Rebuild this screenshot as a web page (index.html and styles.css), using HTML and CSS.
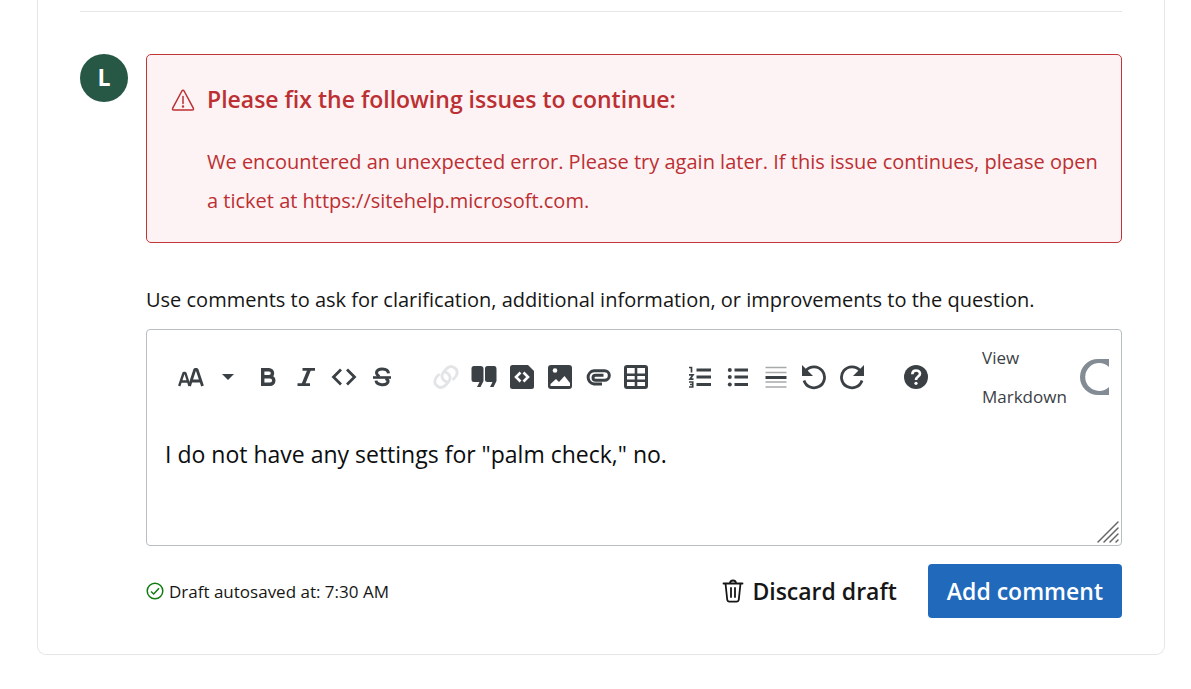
FILE: index.html
```html
<!DOCTYPE html>
<html lang="en">
<head>
    <meta charset="UTF-8">
    <meta name="viewport" content="width=device-width, initial-scale=1.0">
    <title>Add comment</title>
    <link rel="stylesheet" href="styles.css">
</head>
<body>
    <main class="card">
        <hr class="divider">
        <section class="comment">
            <div class="avatar">L</div>
            <form class="comment-form">
                <div class="alert" role="alert">
                    <svg class="alert-icon" width="24" height="24" viewBox="0 0 24 24" fill="none" stroke="currentColor" stroke-width="1.5" stroke-linejoin="round" stroke-linecap="round">
                        <path d="M10.9 3 1.7 20.2Q1 22 2.8 22H21.2Q23 22 22.3 20.2L13.1 3Q12 1.500 10.900 3Z"/>
                        <path d="M12 8.500V15.500"/>
                        <circle cx="12" cy="18.500" r=".5"/>
                    </svg>
                    <div>
                        <h2 class="alert-title">Please fix the following issues to continue:</h2>
                        <p class="alert-text">We encountered an unexpected error. Please try again later. If this issue continues, please open a ticket at https://sitehelp.microsoft.com.</p>
                    </div>
                </div>

                <label class="hint" for="comment">Use comments to ask for clarification, additional information, or improvements to the question.</label>

                <div class="editor">
                    <div class="toolbar">
                        <div class="group group-heading">
                            <button type="button" class="tool tool-heading" aria-label="Heading">
                                <svg width="26" height="20" viewBox="0 0 26 20" fill="none" stroke="currentColor" stroke-linejoin="bevel">
                                    <path stroke-width="2.400" d="M1.200 19 5.600 6H7.400L11.500 19M3 14.500H10"/>
                                    <path stroke-width="2.800" d="M11.500 19 16.800 2.500H19L24.500 19M13.500 14H22.500"/>
                                </svg>
                                <svg width="12" height="6" viewBox="0 0 12 6" fill="currentColor"><path d="M0 0H12L6 6Z"/></svg>
                            </button>
                        </div>
                        <div class="group">
                            <button type="button" class="tool" aria-label="Bold">
                                <svg width="26" height="26" viewBox="0 0 26 26" fill="none" stroke="currentColor" stroke-width="3.400"><path d="M7.700 5.700H14A3.500 3.500 0 0 1 14 12.700H7.700M7.700 12.700H15A3.800 3.800 0 0 1 15 20.300H7.700V4"/></svg>
                            </button>
                            <button type="button" class="tool" aria-label="Italic">
                                <svg width="26" height="26" viewBox="0 0 26 26" fill="none" stroke="currentColor" stroke-width="2.800"><path d="M9.500 5.400H22M4.500 20.600H17"/><path stroke-width="3.400" d="M16.500 5 10 21"/></svg>
                            </button>
                            <button type="button" class="tool" aria-label="Code">
                                <svg width="26" height="26" viewBox="0 0 26 26" fill="none" stroke="currentColor" stroke-width="2.800"><path d="M10 5.500 2.500 13 10 20.500M16 5.500 23.500 13 16 20.500"/></svg>
                            </button>
                            <button type="button" class="tool" aria-label="Strikethrough">
                                <svg width="26" height="26" viewBox="0 0 26 26" fill="none" stroke="currentColor" stroke-width="3"><path d="M19.500 9.300C19 3.500 7.500 3.800 7.500 8.500Q7.500 11 10.500 12.500M16.500 14.500Q19.500 15.500 19 18C17.500 22 7.500 21.500 7 16.700"/><path stroke-width="2.600" d="M4 13.500H22"/></svg>
                            </button>
                        </div>
                        <div class="group">
                            <button type="button" class="tool" aria-label="Link" disabled>
                                <svg width="26" height="26" viewBox="0 0 26 26" fill="none" stroke="currentColor" stroke-width="2.800"><path d="M14.500 17.800C9.500 17.200 7.300 12 10.500 8.200L13.500 4.800C18.500-.5 26.500 5 23.300 11.500Q22.300 13.500 19.500 16"/><path d="M11.500 8.200C16.500 8.800 18.700 14 15.500 17.800L12.500 21.200C7.500 26.500-.5 21 2.700 14.500Q3.700 12.500 6.500 10"/></svg>
                            </button>
                            <button type="button" class="tool" aria-label="Quote">
                                <svg width="26" height="26" viewBox="0 0 26 26" fill="currentColor"><path d="M3 2H9.500Q12.500 2 12.500 5V17L9.500 23H6L8.500 18H3Q.5 18 .5 15.500V4.500Q.5 2 3 2Z"/><path d="M16.500 2H23Q25.500 2 25.500 5V17L22.500 23H19L21.500 18H16.500Q14 18 14 15.500V4.500Q14 2 16.500 2Z"/></svg>
                            </button>
                            <button type="button" class="tool" aria-label="Code block">
                                <svg width="26" height="26" viewBox="0 0 26 26" fill="currentColor"><path d="M3.500 1H19L25 7V22.500Q25 25 22.500 25H3.500Q1 25 1 22.500V3.500Q1 1 3.500 1Z"/><path d="M11.500 8.500 7 13 11.500 17.500M14.500 8.500 19 13 14.500 17.500" fill="none" stroke="#fff" stroke-width="2.600"/></svg>
                            </button>
                            <button type="button" class="tool" aria-label="Image">
                                <svg width="26" height="26" viewBox="0 0 26 26"><rect x="1" y="1" width="24" height="24" rx="3" fill="currentColor"/><circle cx="8" cy="6.500" r="2.300" fill="#fff"/><path d="M3.500 22V20L9 15 12 18 17.500 12 23 19V22Z" fill="#fff"/></svg>
                            </button>
                            <button type="button" class="tool" aria-label="Attachment">
                                <svg width="26" height="26" viewBox="0 0 26 26" fill="none" stroke="currentColor" stroke-width="3"><path d="M17 20H9A6.700 6.700 0 0 1 9 6.700H19.500A4.600 4.600 0 0 1 19.500 16.300H10.500A2.500 2.500 0 0 1 10.500 11.300H18.500"/></svg>
                            </button>
                            <button type="button" class="tool" aria-label="Table">
                                <svg width="26" height="26" viewBox="0 0 26 26"><rect x="1" y="1" width="24" height="24" rx="3" fill="currentColor"/><path fill="#fff" d="M4 4H11.700V9.500H4ZM14.300 4H22V9.500H14.300ZM4 12H11.700V15.500H4ZM14.300 12H22V15.500H14.300ZM4 18H11.700V22H4ZM14.300 18H22V22H14.300Z"/></svg>
                            </button>
                        </div>
                        <div class="group">
                            <button type="button" class="tool" aria-label="Numbered list">
                                <svg width="26" height="26" viewBox="0 0 26 26" fill="none" stroke="currentColor"><path stroke-width="2.800" d="M9.500 6H24M9.500 13H24M9.500 20.500H24"/><path stroke-width="1.700" d="M2 3.500H4.500V8.500M2 10.800H6L3 15.200H6.500M2 18H5.700V23H2M3 20.500H5.700"/></svg>
                            </button>
                            <button type="button" class="tool" aria-label="Bulleted list">
                                <svg width="26" height="26" viewBox="0 0 26 26" fill="currentColor"><path d="M9.500 4.600H23V7.400H9.500ZM9.500 11.600H23V14.400H9.500ZM9.500 19.100H23V21.900H9.500Z"/><circle cx="4.800" cy="6" r="2"/><circle cx="4.800" cy="13" r="2"/><circle cx="4.800" cy="20.500" r="2"/></svg>
                            </button>
                            <button type="button" class="tool" aria-label="Horizontal rule">
                                <svg width="26" height="26" viewBox="0 0 26 26" fill="none" stroke="currentColor"><path stroke-width="1.300" opacity=".45" d="M2.500 3.500H23.500M2.500 8.500H23.500M2.500 18H23.500M2.500 23H23.500"/><path stroke-width="3" d="M2.500 13.500H23.500"/></svg>
                            </button>
                            <button type="button" class="tool" aria-label="Undo">
                                <svg width="26" height="26" viewBox="0 0 26 26"><path fill="none" stroke="currentColor" stroke-width="2.800" d="M5 6.500A10.500 10.500 0 1 1 3 16.500"/><path fill="currentColor" d="M1 1V12H12Z"/></svg>
                            </button>
                            <button type="button" class="tool" aria-label="Redo">
                                <svg width="26" height="26" viewBox="0 0 26 26"><path fill="none" stroke="currentColor" stroke-width="2.800" d="M21 6.500A10.500 10.500 0 1 0 23 16.500"/><path fill="currentColor" d="M25 1V12H14Z"/></svg>
                            </button>
                        </div>
                        <div class="group">
                            <button type="button" class="tool" aria-label="Help">
                                <svg width="26" height="26" viewBox="0 0 26 26"><circle cx="13" cy="13" r="12" fill="currentColor"/><path d="M9.300 10.200C9.300 5.300 17 5.300 17 9.800 17 12.500 13 12.700 13 16" fill="none" stroke="#fff" stroke-width="2.600"/><circle cx="13" cy="19.300" r="1.600" fill="#fff"/></svg>
                            </button>
                        </div>
                        <button type="button" class="view-markdown">
                            <span>View Markdown</span>
                            <svg class="toggle" width="29" height="38" viewBox="0 0 29 38" fill="currentColor"><path d="M29 1H18A18 18 0 0 0 18 37H29V29A14 14 0 1 1 29 9Z"/></svg>
                        </button>
                    </div>
                    <textarea id="comment" class="comment-text" spellcheck="false">I do not have any settings for "palm check," no.</textarea>
                    <svg class="resize-handle" width="24" height="24" viewBox="0 0 24 24" stroke="#666" stroke-width="1.500" stroke-linecap="round"><path d="M2 22 22 2M8 22 22 8M14 22 22 14M20 22 22 20"/></svg>
                </div>

                <div class="actions">
                    <p class="autosave">
                        <svg width="18" height="18" viewBox="0 0 18 18" fill="none" stroke="#107c10" stroke-width="1.500"><circle cx="9" cy="9" r="7.800"/><path d="M5 9.500 7.700 12 13 6.300"/></svg>
                        Draft autosaved at: 7:30 AM
                    </p>
                    <button type="button" class="btn">
                        <svg width="22" height="24" viewBox="0 0 22 24" fill="none" stroke="currentColor" stroke-width="1.800" stroke-linecap="round"><path d="M1.500 4.500H20.500M8 4.500Q8 1.500 11 1.500T14 4.500M3.500 4.500 5.200 20.500Q5.500 22.700 7.500 22.700H14.500Q16.500 22.700 16.800 20.500L18.500 4.500M9 9V18M13 9V18"/></svg>
                        Discard draft
                    </button>
                    <button type="submit" class="btn btn-primary">Add comment</button>
                </div>
            </form>
        </section>
    </main>
</body>
</html>
```
FILE: styles.css
```css
* {
    box-sizing: border-box;
}

body {
    margin: 0;
    padding: 0 26px 34px 37px;
    font-family: "Open Sans", "Noto Sans", sans-serif;
    font-size: 20px;
    line-height: 39px;
    color: #161616;
    background-color: #fff;
}

button {
    padding: 0;
    border: none;
    background: none;
    font-family: inherit;
    color: inherit;
    cursor: pointer;
}

svg {
    flex-shrink: 0;
}

.card {
    padding: 11px 42px 36px;
    border: 1px solid #e6e6e6;
    border-top: none;
    border-radius: 0 0 9px 9px;
}

.divider {
    margin: 0 0 42px;
    border: none;
    border-top: 1px solid #e6e6e6;
}

.comment {
    display: flex;
    gap: 18px;
}

.avatar {
    flex-shrink: 0;
    width: 48px;
    height: 48px;
    border-radius: 50%;
    background-color: #275845;
    color: #fff;
    font-size: 23px;
    font-weight: 700;
    line-height: 46px;
    text-align: center;
}

.comment-form {
    flex: 1;
    min-width: 0;
}

.alert {
    display: flex;
    gap: 12px;
    padding: 25px 12px 22px 24px;
    border: 1px solid #c03535;
    border-radius: 5px;
    background-color: #fdf3f4;
    color: #bc2f32;
}

.alert-icon {
    margin-top: 8px;
}

.alert-title {
    margin: 0 0 23px;
    font-size: 23px;
    font-weight: 600;
    line-height: 39px;
}

.alert-text {
    margin: 0;
}

.hint {
    display: block;
    margin-top: 37px;
}

.editor {
    position: relative;
    margin-top: 10px;
    border: 1px solid #b8bec2;
    border-radius: 4px;
}

.toolbar {
    display: flex;
    align-items: center;
    padding: 8px 12px 10px 24px;
    color: #3b4045;
}

.group {
    display: flex;
    margin-right: 26px;
}

.group-heading {
    margin-right: 8px;
}

.tool {
    display: flex;
    align-items: center;
    justify-content: center;
    width: 38px;
    height: 38px;
}

.tool:disabled {
    color: #e2e4e6;
    cursor: default;
}

.tool-heading {
    gap: 18px;
    width: 70px;
}

.view-markdown {
    display: flex;
    flex: 1;
    align-items: center;
    justify-content: space-between;
    margin-left: 21px;
    font-size: 17px;
    line-height: 39px;
    text-align: left;
}

.toggle {
    color: #838c95;
}

.comment-text {
    display: block;
    width: 100%;
    height: 119px;
    padding: 9px 18px;
    border: none;
    border-radius: 4px;
    background: none;
    font-family: inherit;
    font-size: 23px;
    line-height: 39px;
    color: #0c0d0e;
    outline: none;
    resize: none;
}

.resize-handle {
    position: absolute;
    right: 1px;
    bottom: 1px;
}

.actions {
    display: flex;
    align-items: center;
    margin-top: 18px;
}

.autosave {
    display: flex;
    align-items: center;
    gap: 5px;
    margin: 0 auto 0 0;
    font-size: 17px;
}

.btn {
    display: flex;
    align-items: center;
    gap: 8px;
    height: 54px;
    padding: 0 19px;
    border-radius: 4px;
    font-size: 23px;
    font-weight: 600;
}

.btn-primary {
    margin-left: 12px;
    background-color: #2169bb;
    color: #fff;
}
```
